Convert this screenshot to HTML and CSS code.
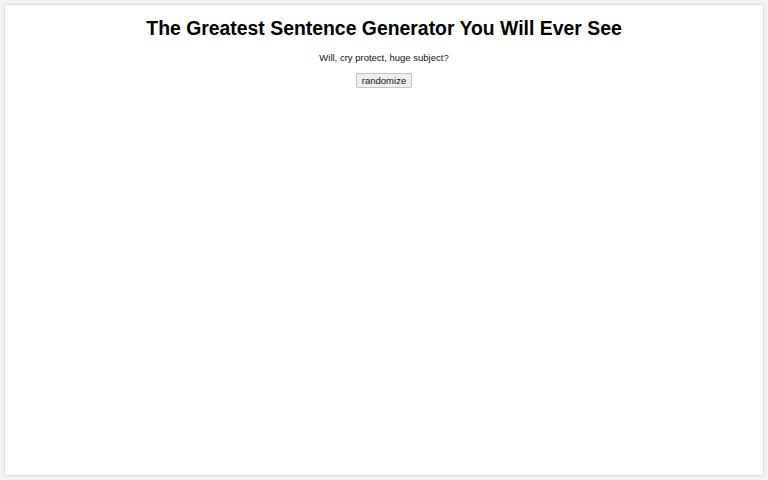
FILE: index.html
```html
<!DOCTYPE html>
<html>
<head>
<meta charset="utf-8">
<link rel="stylesheet" href="styles.css">
</head>
<body>
<div class="panel">
  <h1 class="title">The Greatest Sentence Generator You Will Ever See</h1>
  <p class="sentence">Will, cry protect, huge subject?</p>
  <button class="randomize">randomize</button>
</div>
</body>
</html>
```
FILE: styles.css
```css
html, body {
  height: 100%;
}
body {
  margin: 0;
  padding: 4px;
  box-sizing: border-box;
  background: #f2f2f2;
  font-family: "Liberation Sans", Arial, sans-serif;
}
.panel {
  height: 100%;
  box-sizing: border-box;
  background: #fff;
  border: 1px solid #dcdcdc;
  display: flex;
  flex-direction: column;
  align-items: center;
}
.title {
  font-size: 19.4px;
  font-weight: bold;
  color: #000;
  margin: 12px 0 0;
}
.sentence {
  font-size: 9.5px;
  color: #111;
  margin: 12px 0 0;
}
.randomize {
  margin-top: 10px;
  font-family: "Liberation Sans", Arial, sans-serif;
  font-size: 9.5px;
  padding: 1px 5px;
  background: #efefef;
  border: 1px solid #c4c4c4;
  border-radius: 2px;
  color: #111;
}
```
